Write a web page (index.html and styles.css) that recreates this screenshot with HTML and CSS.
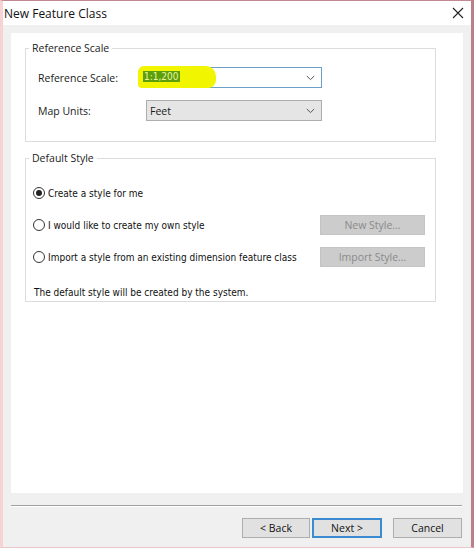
FILE: index.html
```html
<!DOCTYPE html>
<html>
<head>
<meta charset="utf-8">
<link rel="stylesheet" href="styles.css">
</head>
<body>
<div class="window">
  <div class="titlebar">
    <span class="title">New Feature Class</span>
    <svg class="close" width="12" height="12" viewBox="0 0 12 12"><path d="M1 1L11 11M11 1L1 11" stroke="#222" stroke-width="1.1" fill="none"/></svg>
  </div>
  <div class="body">
    <div class="panel">
      <fieldset class="group group-scale">
        <legend>Reference Scale</legend>
        <div class="row">
          <span class="label">Reference Scale:</span>
          <div class="combo combo-edit">
            <span class="hl"><span class="sel">1:1,200</span></span>
            <svg class="chev" width="9" height="6" viewBox="0 0 9 6"><path d="M0.8 1L4.5 4.6L8.2 1" stroke="#555" stroke-width="1" fill="none"/></svg>
          </div>
        </div>
        <div class="row row2">
          <span class="label">Map Units:</span>
          <div class="combo combo-list">
            <span class="val">Feet</span>
            <svg class="chev" width="9" height="6" viewBox="0 0 9 6"><path d="M0.8 1L4.5 4.6L8.2 1" stroke="#555" stroke-width="1" fill="none"/></svg>
          </div>
        </div>
      </fieldset>
      <fieldset class="group group-style">
        <legend>Default Style</legend>
        <div class="opts">
          <label class="radio"><span class="dot on"></span>Create a style for me</label>
          <span></span>
          <label class="radio"><span class="dot"></span>I would like to create my own style</label>
          <span class="btn dis">New Style...</span>
          <label class="radio"><span class="dot"></span>Import a style from an existing dimension feature class</label>
          <span class="btn dis">Import Style...</span>
        </div>
        <p class="note">The default style will be created by the system.</p>
      </fieldset>
    </div>
    <div class="sep"></div>
    <div class="footer">
      <span class="btn">&lt; Back</span>
      <span class="btn primary">Next &gt;</span>
      <span class="btn cancel">Cancel</span>
    </div>
  </div>
</div>
</body>
</html>
```
FILE: styles.css
```css
html, body { margin: 0; padding: 0; }
body { width: 474px; height: 548px; overflow: hidden; background: #f0f0f0; }
.window {
  box-sizing: border-box;
  width: 474px; height: 548px;
  border-top: 1px solid #c08a90;
  border-left: 3px solid #f6d4d4;
  border-right: 3px solid #b88089;
  border-bottom: 1px solid #e8c8c8;
  background: #f0f0f0;
  font-family: "Open Sans", "Noto Sans", sans-serif;
  color: #1a1a1a;
  display: flex; flex-direction: column;
}
.titlebar {
  height: 24px; background: #fff;
  display: flex; align-items: center; justify-content: space-between;
  padding: 0 7px 0 1px;
}
.title { font-size: 12px; color: #111; }
.close { display: block; }
.body { flex: 1; padding: 8px 8px 0 8px; display: flex; flex-direction: column; }
.panel { background: #fff; height: 460px; box-sizing: border-box; padding-top: 8px; }
.group {
  margin: 0 27px 0 14px;
  border: 1px solid #dcdcdc;
  padding: 0;
}
.group legend {
  font-size: 10.5px; line-height: 14px; padding: 0 3px; color: #222;
}
.group-scale legend { margin-left: -9px; }
.group-style legend { margin-left: -4px; }
.group-scale { padding: 12px 0 20px 12px; }
.row { display: flex; align-items: center; height: 21px; }
.row2 { margin-top: 12px; }
.label { font-size: 10.5px; width: 108px; }
.combo {
  box-sizing: border-box; width: 176px; height: 21px;
  display: flex; align-items: center; justify-content: space-between;
  padding: 0 6px 0 3px; position: relative;
}
.combo-edit { border: 1px solid #6aa0c8; background: #fff; }
.combo-list { border: 1px solid #adadad; background: #e5e5e5; }
.val { font-size: 10.5px; }
.hl {
  margin-left: -12px; background: #f2f500; border-radius: 6px 10px 8px 4px;
  height: 22px; width: 78px; display: flex; align-items: center; padding-left: 5px; box-sizing: border-box;
  margin-top: -2px;
}
.sel {
  background: #5e9e0a; color: #e8f6a0; font-family: "DejaVu Sans Condensed", "DejaVu Sans", sans-serif;
  font-stretch: condensed; font-size: 10px; line-height: 11px; padding: 0 1px;
}
.chev { display: block; }
.group-style { margin-top: 9px; padding: 18px 0 0 7px; }
.opts {
  display: grid; grid-template-columns: 1fr 105px; grid-auto-rows: 20px; row-gap: 12px;
  align-items: center; padding-right: 10px;
}
.radio {
  display: flex; align-items: center; gap: 3px;
  font-family: "DejaVu Sans Condensed", "DejaVu Sans", sans-serif; font-stretch: condensed;
  font-size: 10px; color: #111;
}
.dot {
  box-sizing: border-box; width: 12px; height: 12px; border-radius: 50%;
  border: 1px solid #333; background: #fff; display: flex; align-items: center; justify-content: center;
}
.dot.on::after { content: ""; width: 6px; height: 6px; border-radius: 50%; background: #222; }
.btn {
  box-sizing: border-box; height: 20px; display: flex; align-items: center; justify-content: center;
  font-size: 10.5px; border: 1px solid #adadad; background: #e1e1e1; color: #111;
}
.btn.dis { background: #cccccc; border-color: #c4c4c4; color: #8a8a8a; }
.note {
  margin: 19px 0 1px 1px; line-height: 14px;
  font-family: "DejaVu Sans Condensed", "DejaVu Sans", sans-serif; font-stretch: condensed;
  font-size: 10px; color: #111;
}
.sep { height: 0; border-top: 1px solid #a0a0a0; border-bottom: 1px solid #fff; margin-top: 12px; margin-right: 1px; }
.footer { display: flex; justify-content: flex-end; padding-top: 11px; padding-right: 1px; }
.footer .btn { width: 68px; height: 20px; }
.footer .primary { margin-left: 2px; border: 2px solid #3c8ad0; width: 70px; }
.footer .cancel { margin-left: 11px; width: 69px; }
```
